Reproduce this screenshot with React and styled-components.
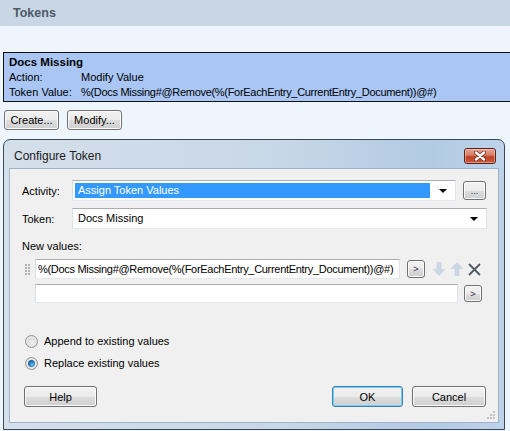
import styled, { createGlobalStyle } from "styled-components";

const GlobalStyle = createGlobalStyle`
  html, body {
    margin: 0;
    padding: 0;
  }
  body {
    font-family: "Liberation Sans", Arial, sans-serif;
    font-size: 11px;
    color: #000;
  }
`;

const VALUE = "%(Docs Missing#@Remove(%(ForEachEntry_CurrentEntry_Document))@#)";

export default function App() {
  return (
    <Page>
      <GlobalStyle />
      <Header>Tokens</Header>
      <SelectedItem>
        <ItemTitle>Docs Missing</ItemTitle>
        <InfoRow>
          <span>Action:</span>
          <span>Modify Value</span>
        </InfoRow>
        <InfoRow>
          <span>Token Value:</span>
          <LongText>{VALUE}</LongText>
        </InfoRow>
      </SelectedItem>
      <ButtonRow>
        <WinButton $w={55}>Create...</WinButton>
        <WinButton $w={55}>Modify...</WinButton>
      </ButtonRow>

      <Dialog>
        <TitleBar>
          <TitleText>Configure Token</TitleText>
          <CloseButton>
            <svg width="12" height="10" viewBox="0 0 12 10">
              <path d="M2 1.5 L10 8.5 M10 1.5 L2 8.5" stroke="#6a2a20" strokeWidth="4" strokeLinecap="round" />
              <path d="M2 1.5 L10 8.5 M10 1.5 L2 8.5" stroke="#fff" strokeWidth="2.4" strokeLinecap="round" />
            </svg>
          </CloseButton>
        </TitleBar>
        <Client>
          <FieldRow $mt={11}>
            <FieldLabel>Activity:</FieldLabel>
            <Combo $w={384}>
              <ComboValue $selected>Assign Token Values</ComboValue>
              <DropArrow />
            </Combo>
            <SmallButton $w={23} $h={19} $ml={7}>...</SmallButton>
          </FieldRow>
          <FieldRow $mt={7}>
            <FieldLabel>Token:</FieldLabel>
            <Combo $w={415}>
              <ComboValue>Docs Missing</ComboValue>
              <DropArrow />
            </Combo>
          </FieldRow>
          <SectionLabel>New values:</SectionLabel>
          <ValueRow $mt={6}>
            <Grip>
              <svg width="5" height="11" viewBox="0 0 5 11">
                {[0, 3, 6, 9].map((y) => (
                  <g key={y}>
                    <rect x="0" y={y} width="2" height="2" fill="#b4b4b4" />
                    <rect x="3" y={y} width="2" height="2" fill="#b4b4b4" />
                  </g>
                ))}
              </svg>
            </Grip>
            <TextBox $w={365} $h={20}>
              <LongText>{VALUE}</LongText>
            </TextBox>
            <SmallButton $w={18} $h={18} $ml={7}>&gt;</SmallButton>
            <Tools>
              <svg width="16" height="16" viewBox="0 0 16 16">
                <path d="M5.5 1 H10.5 V8 H14.5 L8 15 L1.5 8 H5.5 Z" fill="#cbd7e3" />
              </svg>
              <svg width="16" height="16" viewBox="0 0 16 16">
                <path d="M5.5 15 H10.5 V8 H14.5 L8 1 L1.5 8 H5.5 Z" fill="#cbd7e3" />
              </svg>
              <svg width="15" height="15" viewBox="0 0 15 15">
                <path d="M2 2 L13 13 M13 2 L2 13" stroke="#505a65" strokeWidth="1.8" />
              </svg>
            </Tools>
          </ValueRow>
          <ValueRow $mt={5}>
            <Grip $hidden />
            <TextBox $w={423} $h={19} />
            <SmallButton $w={18} $h={17} $ml={6}>&gt;</SmallButton>
          </ValueRow>

          <RadioRow $mt={30}>
            <Radio />
            Append to existing values
          </RadioRow>
          <RadioRow $mt={6}>
            <Radio $checked />
            Replace existing values
          </RadioRow>

          <DialogButtons>
            <WinButton $w={73} $h={21}>Help</WinButton>
            <Spacer />
            <WinButton $w={71} $h={21} $default>OK</WinButton>
            <WinButton $w={74} $h={21}>Cancel</WinButton>
          </DialogButtons>

          <SizeGrip>
            <svg width="8" height="8" viewBox="0 0 8 8">
              {[[6, 0], [3, 3], [6, 3], [0, 6], [3, 6], [6, 6]].map(([x, y]) => (
                <rect key={`${x}-${y}`} x={x} y={y} width="2" height="2" fill="#c2c2c2" />
              ))}
            </svg>
          </SizeGrip>
        </Client>
      </Dialog>
    </Page>
  );
}

const Page = styled.div`
  width: 510px;
  height: 431px;
  background: #eef5fd;
  overflow: hidden;
`;

const Header = styled.div`
  height: 26px;
  display: flex;
  align-items: center;
  padding-left: 13px;
  background: #c9d7e4;
  color: #4d5966;
  font-weight: bold;
  font-size: 12.5px;
`;

const SelectedItem = styled.div`
  box-sizing: border-box;
  margin: 26px 0 0 3px;
  height: 50px;
  padding: 2px 0 0 5px;
  border: 1px solid #111;
  border-right: none;
  background: #a9c6f5;
  line-height: 15px;
  white-space: nowrap;
`;

const ItemTitle = styled.div`
  font-weight: bold;
  font-size: 11.5px;
`;

const InfoRow = styled.div`
  display: grid;
  grid-template-columns: 72px 1fr;
`;

const LongText = styled.span`
  letter-spacing: -0.3px;
`;

const ButtonRow = styled.div`
  display: flex;
  gap: 8px;
  margin-top: 8px;
  padding-left: 4px;
`;

const WinButton = styled.button`
  box-sizing: border-box;
  width: ${(p) => p.$w}px;
  height: ${(p) => p.$h || 20}px;
  padding: 0;
  font-family: inherit;
  font-size: 11px;
  color: #000;
  border: 1px solid ${(p) => (p.$default ? "#3c7fb1" : "#707070")};
  border-radius: 3px;
  background: linear-gradient(#f2f2f2 0%, #ebebeb 50%, #dddddd 51%, #cfcfcf 100%);
  box-shadow: inset 0 0 0 1px ${(p) => (p.$default ? "#6fd3f7" : "#fbfbfb")};
`;

const Dialog = styled.div`
  box-sizing: border-box;
  width: 502px;
  height: 291px;
  margin: 9px 0 0 3px;
  display: flex;
  flex-direction: column;
  padding: 0 5px 6px 5px;
  border: 1px solid #3b4856;
  border-radius: 7px 7px 0 0;
  background: linear-gradient(90deg, #d4dfea 0%, #c8d7e7 55%, #b2cae3 85%, #bed3ea 100%);
`;

const TitleBar = styled.div`
  box-sizing: border-box;
  height: 28px;
  display: flex;
  align-items: center;
  justify-content: space-between;
  padding: 3px 3px 0 5px;
`;

const TitleText = styled.span`
  font-size: 12px;
  color: #1b1b1b;
`;

const CloseButton = styled.div`
  box-sizing: border-box;
  width: 32px;
  height: 16px;
  display: flex;
  align-items: center;
  justify-content: center;
  border: 1px solid #5b1e17;
  border-radius: 3px;
  background: linear-gradient(#e7a796 0%, #d67a62 45%, #bf4124 55%, #c9573a 100%);
  box-shadow: inset 0 0 0 1px rgba(255, 220, 210, 0.5);
`;

const Client = styled.div`
  position: relative;
  flex: 1;
  display: flex;
  flex-direction: column;
  border: 1px solid #9cb3ca;
  background: #f0f0f0;
`;

const FieldRow = styled.div`
  display: flex;
  align-items: center;
  margin-top: ${(p) => p.$mt}px;
  padding-left: 12px;
`;

const FieldLabel = styled.span`
  width: 50px;
`;

const Combo = styled.div`
  box-sizing: border-box;
  width: ${(p) => p.$w}px;
  height: 21px;
  display: flex;
  align-items: center;
  padding: 2px;
  background: #fff;
  border: 1px solid;
  border-color: #abadb3 #e2e3ea #e3e9ef #dbdfe6;
`;

const ComboValue = styled.div`
  flex: 1;
  height: 15px;
  line-height: 15px;
  padding-left: 3px;
  background: ${(p) => (p.$selected ? "#3399ff" : "transparent")};
  color: ${(p) => (p.$selected ? "#fff" : "#000")};
`;

const DropArrow = styled.div`
  width: 0;
  height: 0;
  margin: 1px 6px 0 9px;
  border-left: 4px solid transparent;
  border-right: 4px solid transparent;
  border-top: 4px solid #000;
`;

const SmallButton = styled.div`
  box-sizing: border-box;
  width: ${(p) => p.$w}px;
  height: ${(p) => p.$h}px;
  margin-left: ${(p) => p.$ml}px;
  display: flex;
  align-items: center;
  justify-content: center;
  font-size: 9px;
  color: #1c2656;
  border: 1px solid #707070;
  border-radius: 3px;
  background: linear-gradient(#f2f2f2 0%, #ebebeb 50%, #dddddd 51%, #cfcfcf 100%);
  box-shadow: inset 0 0 0 1px #fbfbfb;
`;

const SectionLabel = styled.div`
  margin-top: 11px;
  padding-left: 12px;
  line-height: 13px;
`;

const ValueRow = styled.div`
  display: flex;
  align-items: center;
  margin-top: ${(p) => p.$mt}px;
  padding-left: 15px;
`;

const Grip = styled.div`
  width: 5px;
  margin-right: 5px;
  display: flex;
  visibility: ${(p) => (p.$hidden ? "hidden" : "visible")};
`;

const TextBox = styled.div`
  box-sizing: border-box;
  width: ${(p) => p.$w}px;
  height: ${(p) => p.$h}px;
  padding-left: 2px;
  line-height: 18px;
  white-space: nowrap;
  overflow: hidden;
  background: #fff;
  border: 1px solid;
  border-color: #abadb3 #e2e3ea #e3e9ef #dbdfe6;
`;

const Tools = styled.div`
  display: flex;
  align-items: center;
  gap: 2px;
  margin-left: 6px;
`;

const RadioRow = styled.label`
  display: flex;
  align-items: center;
  gap: 6px;
  height: 16px;
  margin-top: ${(p) => p.$mt}px;
  padding-left: 15px;
`;

const Radio = styled.span`
  box-sizing: border-box;
  width: 13px;
  height: 13px;
  border-radius: 50%;
  border: 1px solid #8f8f8f;
  background: radial-gradient(circle, #f4f4f4 0%, #dcdcdc 100%);
  display: flex;
  align-items: center;
  justify-content: center;

  &::after {
    content: "";
    width: 7px;
    height: 7px;
    border-radius: 50%;
    background: ${(p) =>
      p.$checked
        ? "radial-gradient(circle at 60% 65%, #6cc3f4 0%, #1c6fae 55%, #0b3f6e 100%)"
        : "radial-gradient(circle at 60% 65%, #f4f4f4 0%, #cfcfcf 100%)"};
  }
`;

const DialogButtons = styled.div`
  display: flex;
  gap: 9px;
  margin-top: 15px;
  padding: 0 12px 0 14px;
`;

const Spacer = styled.div`
  flex: 1;
`;

const SizeGrip = styled.div`
  position: absolute;
  right: 3px;
  bottom: 3px;
  display: flex;
`;
